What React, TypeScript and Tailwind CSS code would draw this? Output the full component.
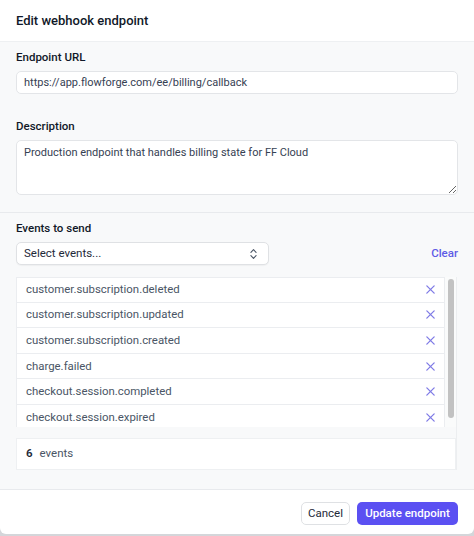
import React, { useState } from 'react'

const EVENTS = [
  'customer.subscription.deleted',
  'customer.subscription.updated',
  'customer.subscription.created',
  'charge.failed',
  'checkout.session.completed',
  'checkout.session.expired',
]

function XMark() {
  return (
    <svg viewBox="0 0 12 12" className="h-[11px] w-[11px]" fill="none" stroke="currentColor" strokeWidth="1.4" strokeLinecap="round">
      <path d="M2 2l8 8M10 2l-8 8" />
    </svg>
  )
}

function UpDown() {
  return (
    <svg viewBox="0 0 10 14" className="h-[12px] w-[9px] text-gray-600" fill="none" stroke="currentColor" strokeWidth="1.3" strokeLinecap="round" strokeLinejoin="round">
      <path d="M2 5l3-3 3 3M2 9l3 3 3-3" />
    </svg>
  )
}

export default function App() {
  const [url, setUrl] = useState('https://app.flowforge.com/ee/billing/callback')
  const [description, setDescription] = useState('Production endpoint that handles billing state for FF Cloud')
  const [events, setEvents] = useState<string[]>(EVENTS)

  return (
    <div className="h-[536px] w-[474px] bg-[#d4d6da]" style={{ fontFamily: 'Roboto, "Liberation Sans", sans-serif' }}>
      <div className="flex h-[534px] flex-col overflow-hidden rounded-b-[6px] bg-white">
        <div className="flex h-[42px] items-center border-b border-[#eef0f2] px-4">
          <h2 className="text-[13px] font-medium text-gray-900">Edit webhook endpoint</h2>
        </div>

        <div className="border-b border-[#e8eaed] bg-[#f8f9fa] px-4 pb-[17px] pt-[5px]">
          <label className="block text-[11.5px] font-medium leading-[20px] text-gray-900">Endpoint URL</label>
          <input
            value={url}
            onChange={(e) => setUrl(e.target.value)}
            className="mt-[4px] h-[23px] w-full rounded-[5px] border border-[#e3e5e8] bg-white px-[7px] text-[11px] text-gray-700 outline-none"
          />
          <label className="mt-[22px] block text-[11.5px] font-medium leading-[20px] text-gray-900">Description</label>
          <textarea
            value={description}
            onChange={(e) => setDescription(e.target.value)}
            className="mt-[4px] block h-[55px] w-full rounded-[5px] border border-[#e3e5e8] bg-white px-[7px] py-[3px] text-[11px] leading-[17px] text-gray-700 outline-none"
          />
        </div>

        <div className="border-b border-[#e8eaed] bg-[#f8f9fa] px-4 pb-[19px] pt-[5px]">
          <label className="block text-[11.5px] font-medium leading-[20px] text-gray-900">Events to send</label>
          <div className="mt-[4px] flex items-center justify-between">
            <button className="flex h-[23px] w-[253px] items-center justify-between rounded-[5px] border border-[#dfe1e4] bg-white pl-[7px] pr-[10px] text-[11.5px] text-gray-800 shadow-[0_1px_1px_rgba(0,0,0,0.04)]">
              <span>Select events...</span>
              <UpDown />
            </button>
            <button onClick={() => setEvents([])} className="text-[11.5px] font-medium text-[#5e5ce6]">Clear</button>
          </div>

          <div className="mt-[12px] mr-[1px] border-r border-[#eceef0]">
            <div className="flex h-[150px]">
              <div className="h-full flex-1 overflow-hidden">
                {events.map((ev) => (
                  <div key={ev} className="flex h-[25.6px] items-center justify-between border border-t-0 border-[#ebedf0] bg-white pl-[9px] pr-[8px] first:border-t">
                    <span className="text-[11.4px] text-gray-600">{ev}</span>
                    <button onClick={() => setEvents(events.filter((x) => x !== ev))} className="text-[#7f7be6]">
                      <XMark />
                    </button>
                  </div>
                ))}
              </div>
              <div className="flex w-[11px] justify-center bg-[#fafbfb] pt-[2px]">
                <div className="h-[139px] w-[6px] rounded-full bg-[#c2c2c2]" />
              </div>
            </div>
            <div className="mt-[11px] flex h-[32px] items-center gap-[7px] border border-[#eef0f2] bg-white px-[9px] text-[11.5px]">
              <span className="font-semibold text-gray-800">{events.length}</span>
              <span className="text-gray-600">events</span>
            </div>
          </div>
        </div>

        <div className="flex flex-1 items-start justify-end gap-[7px] px-4 pt-[12px]">
          <button className="h-[23px] w-[49px] rounded-[5px] border border-[#dfe1e4] bg-white text-[11.5px] text-gray-800">Cancel</button>
          <button className="h-[23px] w-[101px] rounded-[5px] bg-[#5b50f2] text-[11.5px] font-medium text-white">Update endpoint</button>
        </div>
      </div>
    </div>
  )
}
